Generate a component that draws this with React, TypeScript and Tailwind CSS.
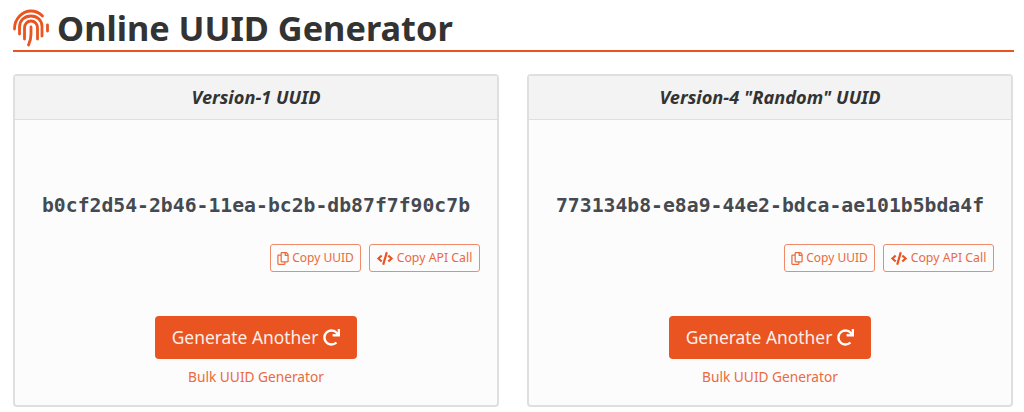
import { FaCode, FaRegCopy, FaRedo } from 'react-icons/fa';

const font = "font-['Noto_Sans',sans-serif]";

function Fingerprint() {
  return (
    <svg viewBox="0 0 38 38" className="w-[38px] h-[38px] text-[#e95420]" fill="none" stroke="currentColor" strokeWidth="2.800" strokeLinecap="round">
      <path d="M1.500 20C1.500 10 9 2 18 2c4.500 0 8.500 2 11.500 5" />
      <path d="M34.500 16v6" />
      <path d="M6.500 25v-7C6.500 11.500 11.500 7 18 7s11 4.500 11 10.500V27" />
      <path d="M11.500 30V19c0-4 2.800-7 6.500-7s6.500 3 6.500 7v11" />
      <path d="M15.500 36c1.500-3 2.500-7 2.500-11v-7" />
    </svg>
  );
}

function Card({ title, uuid }: { title: string; uuid: string }) {
  return (
    <div className="flex-1 h-[333px] bg-[#fcfcfc] border-2 border-[#dfdfdf] rounded-[4px] flex flex-col">
      <div className="h-[44px] bg-[#f3f3f3] border-b border-[#dfdfdf] flex items-center justify-center">
        <h2 className="text-[18.200px] font-bold italic text-[#333]">{title}</h2>
      </div>
      <div className="flex-1 flex flex-col px-[17px]">
        <p className="mt-[74px] text-center font-['DejaVu_Sans_Mono',monospace] font-bold text-[19.750px] leading-[24px] text-[#454a50] whitespace-nowrap">
          {uuid}
        </p>
        <div className="mt-[26px] flex justify-end gap-[8px]">
          <button className="h-[28px] w-[91px] flex items-center justify-center gap-[3px] border border-[#f08a68] rounded-[3px] text-[12px] text-[#ea6a3e]">
            <FaRegCopy className="w-[12px] h-[13px]" />
            Copy UUID
          </button>
          <button className="h-[28px] w-[111px] flex items-center justify-center gap-[4px] border border-[#f08a68] rounded-[3px] text-[12.300px] text-[#ea6a3e]">
            <FaCode className="w-[16px] h-[13px] text-[#e95420]" />
            Copy API Call
          </button>
        </div>
        <div className="mt-[44px] flex flex-col items-center">
          <button className="h-[43px] w-[202px] bg-[#e95420] rounded-[4px] flex items-center justify-center gap-[5px] text-[17.400px] text-[#fdeee8]">
            Generate Another
            <FaRedo className="w-[17px] h-[17px] text-white" />
          </button>
          <a className="mt-[8px] text-[13.700px] leading-[20px] text-[#ea6a3e]">Bulk UUID Generator</a>
        </div>
      </div>
    </div>
  );
}

export default function App() {
  return (
    <div className={`${font} w-[1024px] h-[412px] overflow-hidden bg-white pl-[13px] pr-[10px]`}>
      <div className="h-[52px] border-b-2 border-[#e95420] flex items-center gap-[6px] pt-[5px]">
        <Fingerprint />
        <h1 className="text-[34.300px] leading-[40px] font-bold text-[#333]">Online UUID Generator</h1>
      </div>
      <div className="mt-[22px] flex gap-[28px] pr-[1px]">
        <Card title="Version-1 UUID" uuid="b0cf2d54-2b46-11ea-bc2b-db87f7f90c7b" />
        <Card title={'Version-4 "Random" UUID'} uuid="773134b8-e8a9-44e2-bdca-ae101b5bda4f" />
      </div>
    </div>
  );
}
